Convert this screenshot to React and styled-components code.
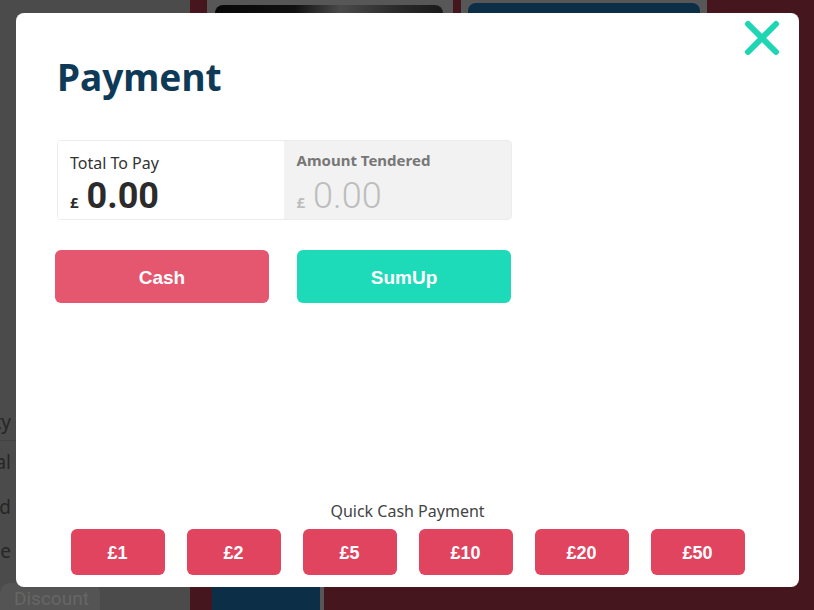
import React from "react";
import styled, { createGlobalStyle } from "styled-components";

const Global = createGlobalStyle`
  html, body { margin: 0; padding: 0; }
  body { width: 814px; height: 610px; overflow: hidden; font-family: "Noto Sans", "Open Sans", sans-serif; }
  * { box-sizing: border-box; }
`;

const Page = styled.div`
  position: relative;
  width: 814px;
  height: 610px;
  display: flex;
  overflow: hidden;
`;

const Sidebar = styled.div`
  width: 190px;
  background: #4b4b4b;
  display: flex;
  flex-direction: column;
  justify-content: flex-end;
`;

const SideRow = styled.div`
  height: ${(p) => p.$h}px;
  padding-bottom: ${(p) => p.$pb || 0}px;
  display: flex;
  align-items: center;
  border-bottom: ${(p) => (p.$line ? "1px solid #434343" : "none")};
`;

const SideLabel = styled.div`
  width: 11px;
  overflow: hidden;
  display: flex;
  justify-content: flex-end;
  white-space: nowrap;
  font-size: 19px;
  color: #262626;
`;

const DiscountBtn = styled.div`
  width: 100px;
  height: 27px;
  margin-top: 10px;
  background: #545454;
  border-radius: 10px 10px 0 0;
  color: #666;
  font-family: "Roboto", sans-serif;
  font-size: 19px;
  padding: 4px 0 0 14px;
`;

const Main = styled.div`
  flex: 1;
  background: #46161e;
  display: flex;
  flex-direction: column;
  justify-content: space-between;
`;

const TileRow = styled.div`
  display: flex;
  gap: 8px;
  padding-left: 17px;
`;

const Tile = styled.div`
  width: 246px;
  height: 60px;
  background: #575757;
  padding: ${(p) => p.$pad};
`;

const Card = styled.div`
  height: 100%;
  border-radius: 8px;
  background: ${(p) => p.$bg};
`;

const BottomRow = styled.div`
  display: flex;
  padding-left: 22px;
  height: 30px;
`;

const BottomCard = styled.div`
  width: 108px;
  background: #0c2e47;
`;

const BottomEdge = styled.div`
  width: 4px;
  background: #575757;
`;

const Modal = styled.div`
  position: absolute;
  left: 16px;
  top: 13px;
  width: 783px;
  height: 574px;
  background: #fff;
  border-radius: 8px;
  display: flex;
  flex-direction: column;
  padding: 45px 39px 12px 39px;
`;

const CloseBtn = styled.button`
  position: absolute;
  right: 17px;
  top: 7px;
  width: 40px;
  height: 36px;
  border: 0;
  background: transparent;
  padding: 0;
  display: flex;
  align-items: center;
  justify-content: center;
`;

const Title = styled.h1`
  margin: 0 0 0 2px;
  font-family: "Noto Sans", sans-serif;
  font-weight: 700;
  font-size: 37px;
  line-height: 1;
  color: #0f3a57;
`;

const InfoBox = styled.div`
  margin: 45px 0 0 2px;
  width: 455px;
  height: 80px;
  display: flex;
  border: 1px solid #ececec;
  border-radius: 4px;
  overflow: hidden;
`;

const InfoCell = styled.div`
  flex: 1;
  background: ${(p) => (p.$muted ? "#f2f2f2" : "#fff")};
  padding: ${(p) => (p.$muted ? "10px 13px" : "13px 12px")};
  display: flex;
  flex-direction: column;
`;

const InfoLabel = styled.div`
  font-size: ${(p) => (p.$muted ? 15 : 16)}px;
  line-height: 18px;
  margin-bottom: ${(p) => (p.$muted ? 3 : 0)}px;
  font-weight: ${(p) => (p.$muted ? 700 : 400)};
  color: ${(p) => (p.$muted ? "#777" : "#333")};
`;

const Amount = styled.div`
  display: flex;
  align-items: baseline;
  gap: 8px;
  margin-top: 7px;
  color: ${(p) => (p.$muted ? "#bdbdbd" : "#2b2b2b")};
`;

const Pound = styled.span`
  font-size: 15px;
  line-height: 20px;
  font-weight: 700;
`;

const Value = styled.span`
  font-family: "Roboto", "Noto Sans", sans-serif;
  font-size: 36px;
  line-height: 34px;
  font-weight: ${(p) => (p.$muted ? 300 : 700)};
`;

const MethodRow = styled.div`
  display: flex;
  gap: 28px;
  margin-top: 30px;
`;

const MethodBtn = styled.button`
  width: 214px;
  height: 53px;
  border: 0;
  border-radius: 6px;
  padding: 3px 0 0;
  background: ${(p) => p.$bg};
  color: #fff;
  font-family: "Liberation Sans", Arial, sans-serif;
  font-weight: 700;
  font-size: 19px;
`;

const Spacer = styled.div`
  flex: 1;
`;

const QuickLabel = styled.div`
  text-align: center;
  font-size: 16px;
  line-height: 18px;
  color: #444;
  margin-bottom: 9px;
`;

const QuickRow = styled.div`
  display: flex;
  justify-content: center;
  gap: 22px;
`;

const QuickBtn = styled.button`
  width: 94px;
  height: 46px;
  border: 0;
  border-radius: 6px;
  padding: 3px 0 0;
  background: #e1445f;
  color: #fff;
  font-family: "Liberation Sans", Arial, sans-serif;
  font-weight: 700;
  font-size: 18px;
`;

const quick = ["£1", "£2", "£5", "£10", "£20", "£50"];

export default function App() {
  return (
    <>
      <Global />
      <Page>
        <Sidebar>
          <SideRow $h={31} $pb={7} $line>
            <SideLabel>Quantity</SideLabel>
          </SideRow>
          <SideRow $h={44} $pb={3}>
            <SideLabel>Total</SideLabel>
          </SideRow>
          <SideRow $h={44}>
            <SideLabel>Paid</SideLabel>
          </SideRow>
          <SideRow $h={44}>
            <SideLabel>Change</SideLabel>
          </SideRow>
          <DiscountBtn>Discount</DiscountBtn>
        </Sidebar>
        <Main>
          <TileRow>
            <Tile $pad="5px 10px 0 8px">
              <Card $bg="linear-gradient(90deg, #080808 0%, #111 35%, #4a4a4a 55%, #2a2a2a 80%, #1a1a1a 100%)" />
            </Tile>
            <Tile $pad="3px 7px 0 7px">
              <Card $bg="#0c2e47" />
            </Tile>
          </TileRow>
          <BottomRow>
            <BottomCard />
            <BottomEdge />
          </BottomRow>
        </Main>

        <Modal>
          <CloseBtn aria-label="Close">
            <svg width="38" height="36" viewBox="0 0 38 36">
              <path
                d="M5 4 L33 32 M33 4 L5 32"
                stroke="#1fd6b4"
                strokeWidth="6"
                strokeLinecap="round"
                fill="none"
              />
            </svg>
          </CloseBtn>
          <Title>Payment</Title>
          <InfoBox>
            <InfoCell>
              <InfoLabel>Total To Pay</InfoLabel>
              <Amount>
                <Pound>£</Pound>
                <Value>0.00</Value>
              </Amount>
            </InfoCell>
            <InfoCell $muted>
              <InfoLabel $muted>Amount Tendered</InfoLabel>
              <Amount $muted>
                <Pound>£</Pound>
                <Value $muted>0.00</Value>
              </Amount>
            </InfoCell>
          </InfoBox>
          <MethodRow>
            <MethodBtn $bg="#e5566f">Cash</MethodBtn>
            <MethodBtn $bg="#1ddab9">SumUp</MethodBtn>
          </MethodRow>
          <Spacer />
          <QuickLabel>Quick Cash Payment</QuickLabel>
          <QuickRow>
            {quick.map((q) => (
              <QuickBtn key={q}>{q}</QuickBtn>
            ))}
          </QuickRow>
        </Modal>
      </Page>
    </>
  );
}
